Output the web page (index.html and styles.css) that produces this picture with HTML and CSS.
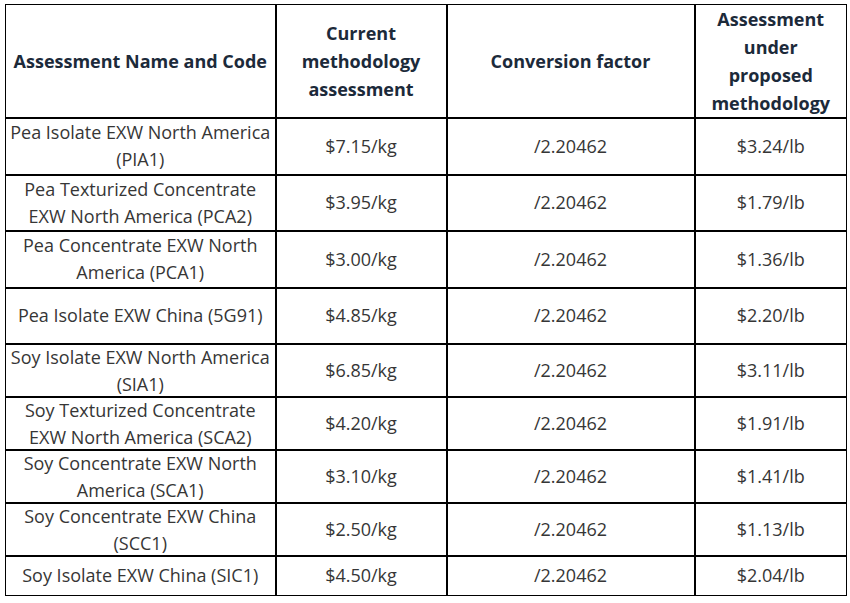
FILE: index.html
```html
<!DOCTYPE html>
<html>
<head>
<meta charset="utf-8">
<link rel="stylesheet" href="styles.css">
</head>
<body>
<div class="wrap">
<table class="grid">
  <colgroup>
    <col class="c1"><col class="c2"><col class="c3"><col class="c4">
  </colgroup>
  <thead>
    <tr class="head">
      <th>Assessment Name and Code</th>
      <th>Current methodology assessment</th>
      <th>Conversion factor</th>
      <th class="narrow">Assessment under proposed methodology</th>
    </tr>
  </thead>
  <tbody>
    <tr class="r57"><td><div class="txt">Pea Isolate EXW North America (PIA1)</div></td><td>$7.15/kg</td><td>/2.20462</td><td>$3.24/lb</td></tr>
    <tr class="r57"><td><div class="txt">Pea Texturized Concentrate EXW North America (PCA2)</div></td><td>$3.95/kg</td><td>/2.20462</td><td>$1.79/lb</td></tr>
    <tr class="r57"><td><div class="txt">Pea Concentrate EXW North America (PCA1)</div></td><td>$3.00/kg</td><td>/2.20462</td><td>$1.36/lb</td></tr>
    <tr class="r57"><td><div class="txt">Pea Isolate EXW China (5G91)</div></td><td>$4.85/kg</td><td>/2.20462</td><td>$2.20/lb</td></tr>
    <tr class="r54"><td><div class="txt">Soy Isolate EXW North America (SIA1)</div></td><td>$6.85/kg</td><td>/2.20462</td><td>$3.11/lb</td></tr>
    <tr class="r54"><td><div class="txt">Soy Texturized Concentrate EXW North America (SCA2)</div></td><td>$4.20/kg</td><td>/2.20462</td><td>$1.91/lb</td></tr>
    <tr class="r54"><td><div class="txt">Soy Concentrate EXW North America (SCA1)</div></td><td>$3.10/kg</td><td>/2.20462</td><td>$1.41/lb</td></tr>
    <tr class="r54"><td><div class="txt">Soy Concentrate EXW China (SCC1)</div></td><td>$2.50/kg</td><td>/2.20462</td><td>$1.13/lb</td></tr>
    <tr class="r38"><td><div class="txt">Soy Isolate EXW China (SIC1)</div></td><td>$4.50/kg</td><td>/2.20462</td><td>$2.04/lb</td></tr>
  </tbody>
</table>
</div>
</body>
</html>
```

FILE: styles.css
```css
html, body {
  margin: 0;
  padding: 0;
  background: #ffffff;
}
.wrap {
  padding: 4px 0 0 5px;
}
.grid {
  border-collapse: collapse;
  width: 841px;
  table-layout: fixed;
  font-family: "Open Sans", "Liberation Sans", sans-serif;
  font-size: 18px;
  line-height: 27px;
  color: #363636;
}
.c1 { width: 270px; }
.c2 { width: 171px; }
.c3 { width: 248px; }
.c4 { width: 152px; }
.grid th, .grid td {
  border: 2px solid #000;
  padding: 0 1px;
  text-align: center;
  vertical-align: middle;
}
.grid th {
  font-weight: 700;
  line-height: 28px;
  color: #1c2a3a;
}
.grid th.narrow {
  padding: 0 12px;
}
.txt {
  margin: -2px 0;
}
.grid tr > :first-child { border-left-width: 1px; }
.grid tr > :last-child { border-right-width: 1px; }
.grid thead tr > * { border-top-width: 1px; }
.grid tbody tr:last-child > * { border-bottom-width: 1px; }
.head { height: 112px; }
.r57 { height: 56.5px; }
.r54 { height: 53px; }
.r38 { height: 39px; }
```
